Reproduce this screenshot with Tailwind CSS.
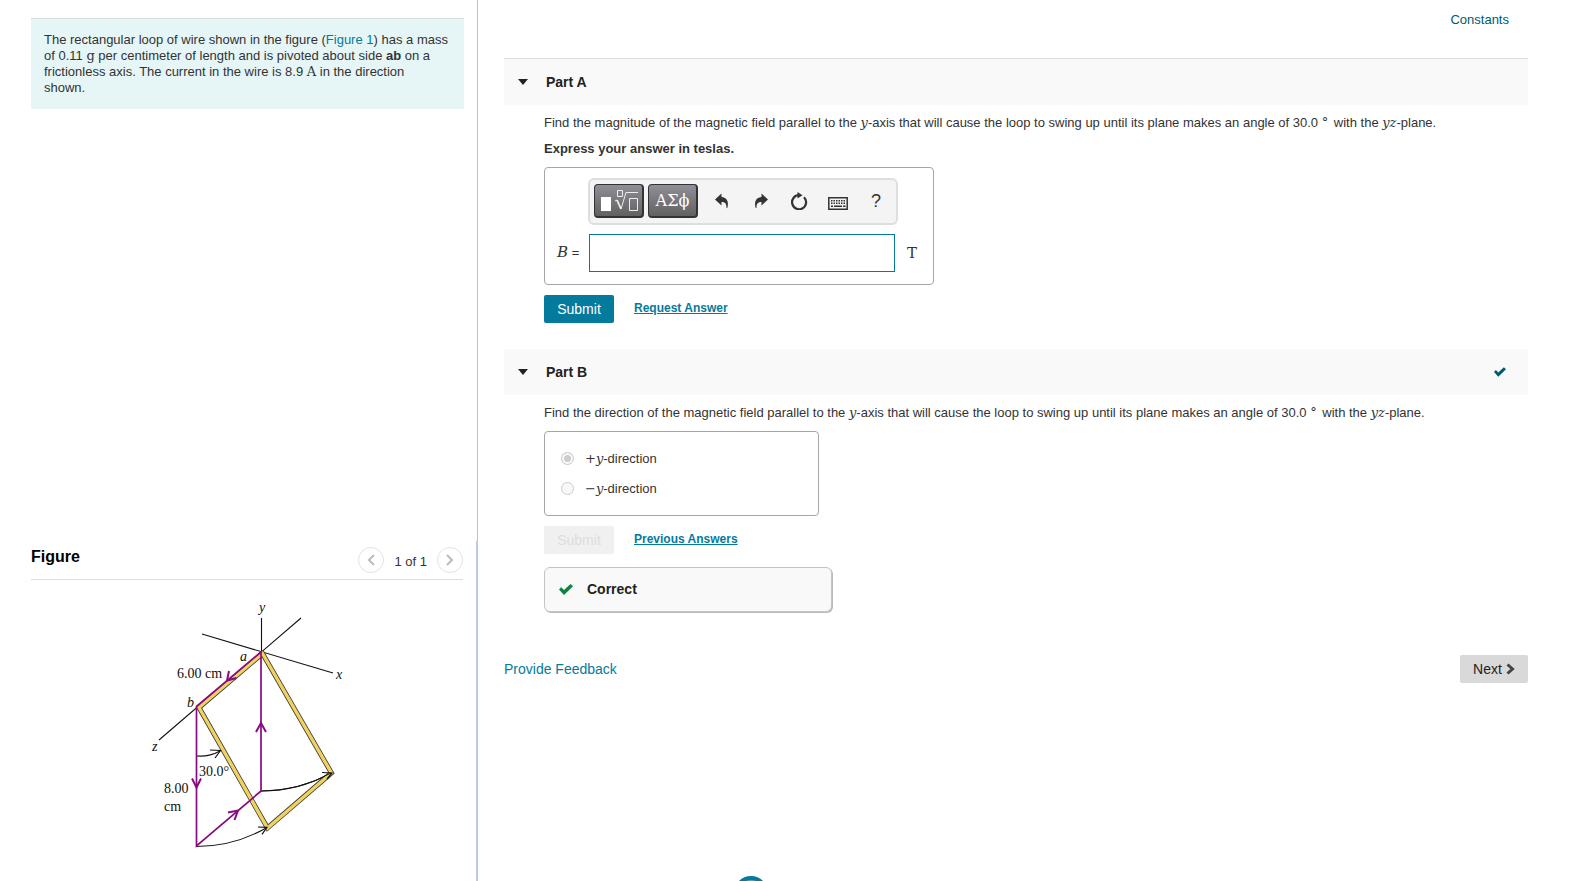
<!DOCTYPE html>
<html lang="en">
<head>
    <meta charset="UTF-8">
    <meta name="viewport" content="width=device-width, initial-scale=1.0">
    <title>Rectangular Loop of Wire</title>
    <script src="https://cdn.jsdelivr.net/npm/@tailwindcss/browser@4"></script>
</head>
<body class="relative flex h-screen overflow-hidden bg-white font-['Liberation_Sans',Arial,sans-serif] text-[13px] leading-4 text-[#333]">

    <!-- Left column: problem intro + figure -->
    <aside class="flex w-[478px] shrink-0 flex-col">
        <div class="flex-1 border-r border-[#b9c4d0] pt-[18px] pr-[13px] pl-[31px]">
            <div class="border-t border-[#d9dcdc] bg-[#e6f6f7] py-[13px] pr-4 pl-[13px]">
                <p>The rectangular loop of wire shown in the figure (<a href="#figure" class="text-[#047a9c]">Figure 1</a>) has a mass of 0.11 <span class="font-['DejaVu_Serif',serif] leading-none">g</span> per centimeter of length and is pivoted about side <b>ab</b> on a frictionless axis. The current in the wire is 8.9 <span class="font-['DejaVu_Serif',serif] leading-none">A</span> in the direction shown.</p>
            </div>
        </div>

        <section id="figure" class="h-[340px] border-r-2 border-[#b9cbe0] pr-[13px] pl-[31px]">
            <div class="flex h-[39px] items-center justify-between border-b border-[#ddd]">
                <h2 class="pb-[6px] text-base font-bold text-black">Figure</h2>
                <div class="flex items-center gap-[10px]">
                    <button aria-label="Previous figure" class="flex size-[26px] items-center justify-center rounded-full border border-[#e3e3e3]">
                        <svg class="h-3 w-2" viewBox="0 0 8 12" fill="none" stroke="#bbb" stroke-width="2"><path d="M7 1 2 6l5 5"/></svg>
                    </button>
                    <span class="pt-[3px]">1 of 1</span>
                    <button aria-label="Next figure" class="flex size-[26px] items-center justify-center rounded-full border border-[#e3e3e3]">
                        <svg class="h-3 w-2" viewBox="0 0 8 12" fill="none" stroke="#bbb" stroke-width="2"><path d="m1 1 5 5-5 5"/></svg>
                    </button>
                </div>
            </div>

            <!-- Loop diagram -->
            <svg class="mt-[10px] ml-[109px] h-[270px] w-[220px]" viewBox="0 0 220 270" fill="none" role="img" aria-label="Wire loop pivoted about side ab">
                <g stroke="#111" stroke-width="1.100">
                    <path d="M121.5 28v34M62 44l131 39M161 28 19 150"/>
                    <path d="M57 166q12 1 23-5M121 201q38 0 70-18M56 256.500q38 0 71-19"/>
                </g>
                <path d="M122.500 63.500 59 117.500 127.500 238 191.500 183Z" stroke="#3d3a30" stroke-width="5"/>
                <path d="M122.500 63.500 59 117.500 127.500 238 191.500 183Z" stroke="#f0d264" stroke-width="3.400"/>
                <g stroke="#111" stroke-width="1.200">
                    <path d="m70 160 10.500.5L75 168M182 182.500l10 .5-5 6M118 237l9 .3-5 7"/>
                    <path d="M121 201q38 0 70-18" stroke-width="1"/>
                </g>
                <g stroke="#870a80" stroke-width="1.700">
                    <path d="M121 62 56.500 116.500V256L121 201Z"/>
                    <path stroke-width="2" d="m89 81-2 9.500 9.500-2.500M116 142l5-9 5 9M52 188.500l4.500 9 4.500-9M88 222.500l10-2-3.500 9.500"/>
                </g>
                <g fill="#111" class="font-['Liberation_Serif',serif] text-sm">
                    <g class="italic">
                        <text x="119" y="22">y</text>
                        <text x="196" y="89">x</text>
                        <text x="12" y="161">z</text>
                        <text x="100" y="71">a</text>
                        <text x="47" y="117">b</text>
                    </g>
                    <text x="37" y="88">6.00 cm</text>
                    <text x="59" y="186">30.0°</text>
                    <text x="24" y="203">8.00</text>
                    <text x="24" y="221">cm</text>
                </g>
            </svg>
        </section>
    </aside>

    <!-- Right column: parts -->
    <main class="min-w-0 flex-1 pr-11 pl-[26px]">
        <div class="flex h-[58px] justify-end pt-3 pr-[19px]">
            <a href="#" class="text-[#005a70]">Constants</a>
        </div>

        <section>
            <header class="flex h-[47px] items-center border-t border-[#ddd] bg-[#f9f9f9] pl-[14px]">
                <button aria-label="Collapse Part A"><svg class="h-[6px] w-[10px]" viewBox="0 0 10 6"><path fill="#222" d="M0 0h10L5 6z"/></svg></button>
                <h2 class="pl-[18px] text-sm leading-4 font-bold text-[#222]">Part A</h2>
            </header>
            <div class="pt-[10px] pl-10">
                <p>Find the magnitude of the magnetic field parallel to the <i class="font-['DejaVu_Serif',serif] leading-none">y</i>-axis that will cause the loop to swing up until its plane makes an angle of 30.0 <span class="pr-0.5 font-['DejaVu_Serif',serif] leading-none">°</span> with the <i class="font-['DejaVu_Serif',serif] leading-none">yz</i>-plane.</p>
                <p class="mt-[10px] font-bold">Express your answer in teslas.</p>
                <div class="mt-[10px] w-[390px] rounded border border-[#a6a6a6] pt-[10px] pr-3 pb-3 pl-3">
                    <div class="ml-[31px] flex h-[47px] w-[310px] items-center gap-1 rounded-md border-2 border-[#dedede] bg-[#f4f4f4] pb-px pl-1">
                        <button aria-label="Templates" class="flex h-[34px] w-[50px] items-center justify-center rounded border border-r-2 border-b-2 border-[#333] bg-linear-to-b from-[#918f98] to-[#616161]">
                            <svg class="h-[22px] w-[38px]" viewBox="0 0 38 22" fill="none" stroke="#eee">
                                <path fill="#fff" stroke="none" d="M1 7h10v14H1z"/>
                                <path d="M17.500.5h5v6h-5zM29.500 8.500h8v12h-8z"/>
                                <path d="m15 11 2-1"/>
                                <path stroke-width="1.800" d="m17 10 4 9"/>
                                <path d="m21 19 5-16.500h12"/>
                            </svg>
                        </button>
                        <button aria-label="Symbols" class="flex h-[34px] w-[50px] items-center justify-center rounded border border-r-2 border-b-2 border-[#333] bg-linear-to-b from-[#918f98] to-[#616161] font-['DejaVu_Serif',serif] text-base text-white">ΑΣϕ</button>
                        <div class="flex flex-1 items-center justify-between px-[10px]">
                            <button aria-label="Undo" class="flex w-5 justify-center"><svg class="h-4 w-4" viewBox="0 0 16 16"><path fill="#333" d="M1 6.500 7.500.5v3.500c5 .5 7.500 4 6 10.500-.5 1-1 1-1 0 0-4-1.500-5.500-5-5.500v3.500z"/></svg></button>
                            <button aria-label="Redo" class="flex w-5 justify-center"><svg class="h-4 w-4" viewBox="0 0 16 16"><path fill="#333" d="M15 6.500 8.500.5v3.500c-5 .5-7.500 4-6 10.500.5 1 1 1 1 0 0-4 1.500-5.500 5-5.500v3.500z"/></svg></button>
                            <button aria-label="Reset" class="flex w-5 justify-center"><svg class="h-[18px] w-[18px]" viewBox="0 0 18 18"><path fill="none" stroke="#333" stroke-width="2.200" d="M14 5.200A7 7 0 1 1 9 3.200"/><path fill="#333" d="M7.500 0 12.500 3.200 7.500 6.500z"/></svg></button>
                            <button aria-label="Keyboard shortcuts" class="flex w-5 justify-center pt-1"><svg class="h-[13px] w-5" viewBox="0 0 20 13" fill="none" stroke="#333"><path stroke-width="1.500" d="M.8.8h18.400v11.400H.8z"/><path stroke-width="1.500" stroke-dasharray="1.500 1" d="M3 3.700h14.500M3 6.300h14.500"/><path stroke-width="1.500" d="M3 9.300h2M6 9.300h8M15 9.300h2.500"/></svg></button>
                            <button aria-label="Help" class="w-5 text-center text-lg leading-5 text-[#333]">?</button>
                        </div>
                    </div>
                    <div class="mt-[9px] flex items-center">
                        <label for="answer" class="w-8"><i class="font-['DejaVu_Serif',serif] text-[15px] leading-none">B</i> =</label>
                        <input id="answer" type="text" class="h-[38px] w-[306px] border border-[#047a9c] bg-white px-2 text-base outline-none">
                        <span class="pl-3 font-['DejaVu_Serif',serif] text-[15px] leading-4">T</span>
                    </div>
                </div>
                <div class="mt-[10px] flex gap-5">
                    <button class="h-7 w-[70px] rounded-xs bg-[#047a9c] text-sm leading-4 text-white">Submit</button>
                    <a href="#" class="mt-[5px] text-xs leading-4 font-bold text-[#047a9c] underline">Request Answer</a>
                </div>
            </div>
        </section>

        <section class="mt-[26px]">
            <header class="flex h-[46px] items-center bg-[#f9f9f9] pr-[22px] pl-[14px]">
                <button aria-label="Collapse Part B"><svg class="h-[6px] w-[10px]" viewBox="0 0 10 6"><path fill="#222" d="M0 0h10L5 6z"/></svg></button>
                <h2 class="flex-1 pl-[18px] text-sm leading-4 font-bold text-[#222]">Part B</h2>
                <svg class="h-[10px] w-3" viewBox="0 0 14 11"><path fill="#005a70" d="M0 5.500 2.200 3.300 5 6 11.500 0 14 2.200 5 11z"/></svg>
            </header>
            <div class="pt-[10px] pl-10">
                <p>Find the direction of the magnetic field parallel to the <i class="font-['DejaVu_Serif',serif] leading-none">y</i>-axis that will cause the loop to swing up until its plane makes an angle of 30.0 <span class="pr-0.5 font-['DejaVu_Serif',serif] leading-none">°</span> with the <i class="font-['DejaVu_Serif',serif] leading-none">yz</i>-plane.</p>
                <div class="mt-[10px] flex w-[275px] flex-col gap-[14px] rounded border border-[#a6a6a6] pt-[18px] pb-[19px] pl-4">
                    <label class="flex h-4 items-center gap-[11px]">
                        <input type="radio" name="direction" checked disabled class="size-[13px] appearance-none rounded-full border border-[#ccc] bg-[#ccc] shadow-[inset_0_0_0_2px_#fafafa]">
                        <span class="pt-px"><span class="font-['DejaVu_Serif',serif] leading-none">+<i>y</i></span>-direction</span>
                    </label>
                    <label class="flex h-4 items-center gap-[11px]">
                        <input type="radio" name="direction" disabled class="size-[13px] appearance-none rounded-full border border-[#ccc] bg-[#f8f8f8]">
                        <span class="pt-px"><span class="font-['DejaVu_Serif',serif] leading-none">−<i>y</i></span>-direction</span>
                    </label>
                </div>
                <div class="mt-[10px] flex gap-5">
                    <button disabled class="h-7 w-[70px] rounded-xs bg-[#f0f0f0] text-sm leading-4 text-[#ddd]">Submit</button>
                    <a href="#" class="mt-[5px] text-xs leading-4 font-bold text-[#047a9c] underline">Previous Answers</a>
                </div>
                <div class="mt-[13px] flex h-[45px] w-[288px] items-center gap-[14px] rounded-md border border-[#c4c4c4] bg-[#f9f9f9] pb-px pl-[14px] shadow-[1px_1px_0_#bbb]">
                    <svg class="h-[11px] w-[14px]" viewBox="0 0 14 11"><path fill="#0b8442" d="M0 5.500 2.200 3.300 5 6 11.500 0 14 2.200 5 11z"/></svg>
                    <span class="text-sm leading-4 font-bold text-[#222]">Correct</span>
                </div>
            </div>
        </section>

        <footer class="mt-[43px] flex items-center justify-between">
            <a href="#" class="text-sm leading-4 text-[#047a9c]">Provide Feedback</a>
            <button class="flex h-7 w-[68px] items-center justify-center gap-1 rounded-xs bg-[#d9d9d9] text-sm leading-4 text-[#222]">Next
                <svg class="h-3 w-[9px]" viewBox="0 0 9 12"><path fill="none" stroke="#444" stroke-width="3" d="m1.500 1.500 5 4.500-5 4.500"/></svg>
            </button>
        </footer>
    </main>

    <!-- Publisher badge, peeks over the bottom edge -->
    <div class="absolute -bottom-[29px] left-[734px] size-[34px] rounded-full border-4 border-[#047a9c] bg-[#5aa9c0]"></div>
</body>
</html>
